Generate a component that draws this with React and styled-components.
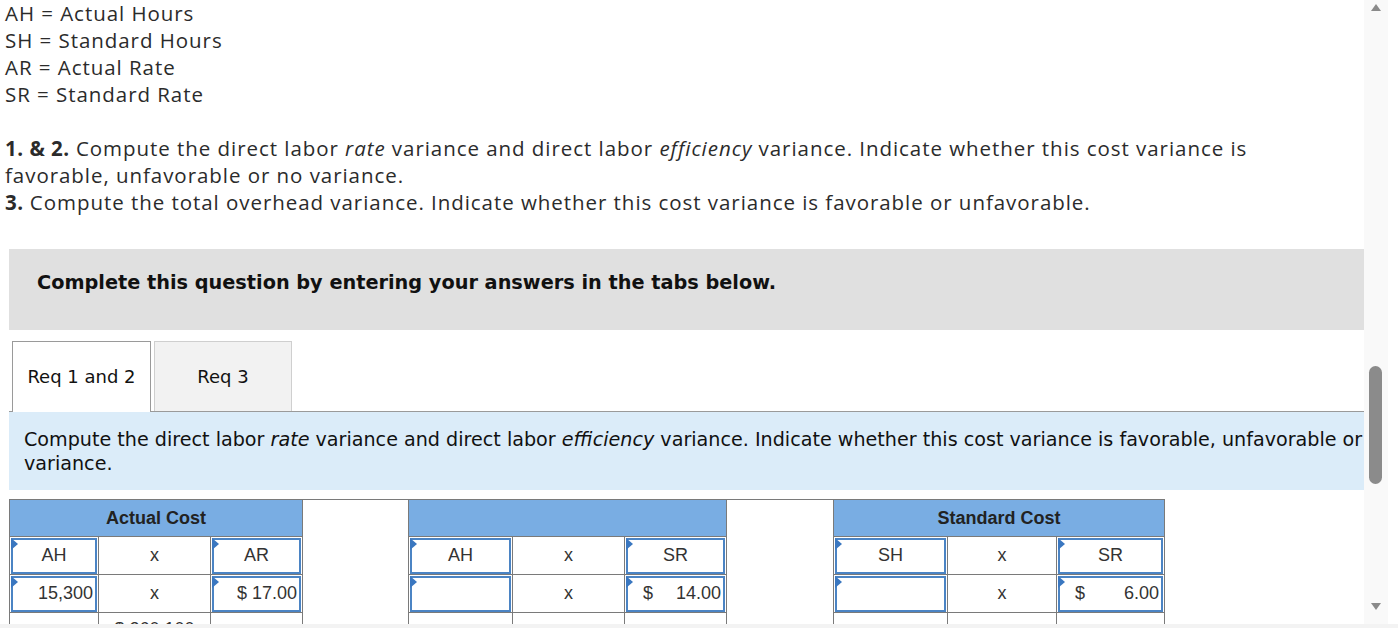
import React from 'react';
import styled, { createGlobalStyle } from 'styled-components';

const Global = createGlobalStyle`
    html, body {
        margin: 0;
        padding: 0;
        background: #fff;
    }
`;

const Frame = styled.div`
    width: 1398px;
    height: 628px;
    display: flex;
    flex-direction: column;
    overflow: hidden;
`;
const Main = styled.div`
    flex: 1;
    min-height: 0;
    display: flex;
`;
const Viewport = styled.div`
    width: 1364px;
    overflow: hidden;
`;
const Content = styled.div`
    width: 1470px;
    padding-left: 9px;
`;
const Defs = styled.div`
    margin-left: -4px;
    font-family: 'Open Sans', sans-serif;
    font-size: 20.5px;
    letter-spacing: 0.95px;
    line-height: 27px;
    color: #2b2b2b;
`;
const Question = styled.p`
    margin: 27px 0 0 -4px;
    width: 1300px;
    font-family: 'Open Sans', sans-serif;
    font-size: 20.5px;
    letter-spacing: 0.95px;
    line-height: 27px;
    color: #2b2b2b;

    b {
        font-weight: 700;
        letter-spacing: 0.5px;
    }
`;
const Banner = styled.div`
    margin-top: 33px;
    height: 81px;
    box-sizing: border-box;
    padding: 22px 0 0 28px;
    background: #e0e0e0;
    font-family: 'DejaVu Sans', Verdana, sans-serif;
    font-size: 19.3px;
    line-height: 24px;
    font-weight: 700;
    color: #111;
`;
const TabRow = styled.div`
    margin-top: 11px;
    padding-left: 3px;
    display: flex;
    align-items: flex-start;
    gap: 3px;
`;
const Tab = styled.div`
    width: ${p => p.$w}px;
    height: ${p => (p.$active ? 71 : 70)}px;
    box-sizing: border-box;
    display: flex;
    align-items: center;
    justify-content: center;
    padding-bottom: ${p => (p.$active ? '1px' : '0')};
    border: 1px solid ${p => (p.$active ? '#9a9a9a' : '#cfcfcf')};
    border-bottom: none;
    background: ${p => (p.$active ? '#fff' : '#f2f2f2')};
    font-family: 'DejaVu Sans', Verdana, sans-serif;
    font-size: 18px;
    color: #111;
    position: relative;
    z-index: ${p => (p.$active ? 2 : 1)};
    margin-bottom: ${p => (p.$active ? '-1px' : '0')};
`;
const Instruction = styled.div`
    box-sizing: border-box;
    width: 1450px;
    height: 79px;
    padding: 16px 15px 0;
    border-top: 1px solid #9a9a9a;
    background: #dbecf9;
    font-family: 'DejaVu Sans', Verdana, sans-serif;
    font-size: 19.15px;
    line-height: 24px;
    color: #111;
`;
const Sheet = styled.table`
    margin-top: 9px;
    border-collapse: collapse;
    table-layout: fixed;
    font-family: 'Liberation Sans', Arial, sans-serif;
    font-size: 18px;
    color: #333;

    td {
        border: 1px solid #7a7a7a;
        padding: 0;
        text-align: center;
    }
`;
const Head = styled.td`
    height: 36px;
    background: ${p => (p.$blank ? '#fff' : '#79ade3')};
    font-weight: 700;
    color: #222;
`;
const Cell = styled.td`
    height: 37px;
    ${p => p.$total && 'border-top: 1px solid #111 !important;'}
    vertical-align: ${p => (p.$total ? 'top' : 'middle')};
    padding-top: ${p => (p.$total ? '6px' : '0')} !important;
`;
const Field = styled.div`
    position: relative;
    box-sizing: border-box;
    height: 36px;
    margin: 0 1px;
    border: 2px solid #4b84c4;
    display: flex;
    align-items: center;
    justify-content: ${p => (p.$align === 'right' ? 'flex-end' : p.$align === 'split' ? 'space-between' : 'center')};
    padding: ${p => (p.$align === 'split' ? '0 2px 0 15px' : '0 2px')};
    background: #fff;

    &::before {
        content: '';
        position: absolute;
        top: -2px;
        left: -2px;
        border-top: 6px solid transparent;
        border-bottom: 6px solid transparent;
        border-left: 7px solid #3a77c0;
    }
`;
const Track = styled.div`
    width: 24px;
    position: relative;
    background: #f9f9f9;
`;
const Arrow = styled.div`
    position: absolute;
    left: 7px;
    ${p => (p.$down ? 'bottom: 14px;' : 'top: 4px;')}
    width: 0;
    height: 0;
    border-left: 5px solid transparent;
    border-right: 5px solid transparent;
    ${p => (p.$down ? 'border-top: 7px solid #8a8a8a;' : 'border-bottom: 7px solid #8a8a8a;')}
`;
const Thumb = styled.div`
    position: absolute;
    left: 5px;
    top: 366px;
    width: 13px;
    height: 118px;
    border-radius: 7px;
    background: #8b8b8b;
`;
const Bottom = styled.div`
    height: 4px;
    background: #f3f3f3;
`;

const widths = [89, 112, 92, 106, 104, 112, 102, 107, 114, 109, 108];

const App = () => {
    return (
        <Frame>
            <Global />
            <Main>
                <Viewport>
                    <Content>
                        <Defs>
                            <div>AH = Actual Hours</div>
                            <div>SH = Standard Hours</div>
                            <div>AR = Actual Rate</div>
                            <div>SR = Standard Rate</div>
                        </Defs>
                        <Question>
                            <b>1. &amp; 2.</b> Compute the direct labor <i>rate</i> variance and direct labor{' '}
                            <i>efficiency</i> variance. Indicate whether this cost variance is favorable,
                            unfavorable or no variance.
                            <br />
                            <b>3.</b> Compute the total overhead variance. Indicate whether this cost variance is
                            favorable or unfavorable.
                        </Question>
                        <Banner>Complete this question by entering your answers in the tabs below.</Banner>
                        <TabRow>
                            <Tab $active $w={139}>Req 1 and 2</Tab>
                            <Tab $w={138}>Req 3</Tab>
                        </TabRow>
                        <Instruction>
                            Compute the direct labor <i>rate</i> variance and direct labor <i>efficiency</i> variance.
                            Indicate whether this cost variance is favorable, unfavorable or no variance.
                        </Instruction>
                        <Sheet>
                            <colgroup>
                                {widths.map((w, i) => (
                                    <col key={i} style={{ width: w }} />
                                ))}
                            </colgroup>
                            <tbody>
                                <tr>
                                    <Head colSpan={3}>Actual Cost</Head>
                                    <Head $blank rowSpan={4} />
                                    <Head colSpan={3} />
                                    <Head $blank rowSpan={4} />
                                    <Head colSpan={3}>Standard Cost</Head>
                                </tr>
                                <tr>
                                    <Cell><Field>AH</Field></Cell>
                                    <Cell>x</Cell>
                                    <Cell><Field>AR</Field></Cell>
                                    <Cell><Field>AH</Field></Cell>
                                    <Cell>x</Cell>
                                    <Cell><Field>SR</Field></Cell>
                                    <Cell><Field>SH</Field></Cell>
                                    <Cell>x</Cell>
                                    <Cell><Field>SR</Field></Cell>
                                </tr>
                                <tr>
                                    <Cell><Field $align="right">15,300</Field></Cell>
                                    <Cell>x</Cell>
                                    <Cell><Field $align="right">$ 17.00</Field></Cell>
                                    <Cell><Field /></Cell>
                                    <Cell>x</Cell>
                                    <Cell><Field $align="split"><span>$</span><span>14.00</span></Field></Cell>
                                    <Cell><Field /></Cell>
                                    <Cell>x</Cell>
                                    <Cell><Field $align="split"><span>$</span><span>6.00</span></Field></Cell>
                                </tr>
                                <tr>
                                    <Cell />
                                    <Cell $total>$ 260,100</Cell>
                                    <Cell />
                                    <Cell />
                                    <Cell />
                                    <Cell />
                                    <Cell />
                                    <Cell />
                                    <Cell />
                                </tr>
                            </tbody>
                        </Sheet>
                    </Content>
                </Viewport>
                <Track>
                    <Arrow />
                    <Thumb />
                    <Arrow $down />
                </Track>
            </Main>
            <Bottom />
        </Frame>
    );
};

export default App;
